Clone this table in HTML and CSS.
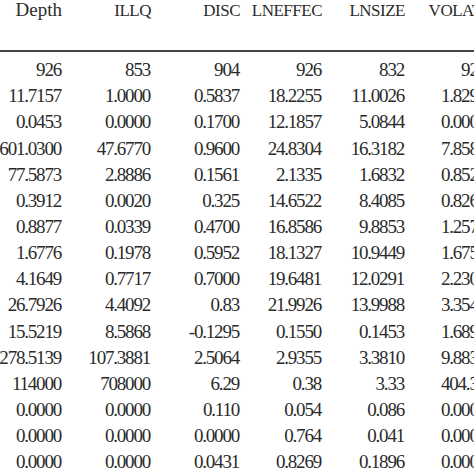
FILE: index.html
```html
<!DOCTYPE html>
<html>
<head>
<meta charset="utf-8">
<link rel="stylesheet" href="styles.css">
</head>
<body>
<div class="table">
  <div class="head">
    <div class="cell h wide">Depth</div>
    <div class="cell h">ILLQ</div>
    <div class="cell h">DISC</div>
    <div class="cell h">LNEFFEC</div>
    <div class="cell h">LNSIZE</div>
    <div class="cell h">VOLATI</div>
  </div>
  <div class="body">
    <div class="cell">926</div><div class="cell">853</div><div class="cell">904</div><div class="cell">926</div><div class="cell">832</div><div class="cell">926</div>
    <div class="cell">11.7157</div><div class="cell">1.0000</div><div class="cell">0.5837</div><div class="cell">18.2255</div><div class="cell">11.0026</div><div class="cell">1.8295</div>
    <div class="cell">0.0453</div><div class="cell">0.0000</div><div class="cell">0.1700</div><div class="cell">12.1857</div><div class="cell">5.0844</div><div class="cell">0.0000</div>
    <div class="cell">601.0300</div><div class="cell">47.6770</div><div class="cell">0.9600</div><div class="cell">24.8304</div><div class="cell">16.3182</div><div class="cell">7.8580</div>
    <div class="cell">77.5873</div><div class="cell">2.8886</div><div class="cell">0.1561</div><div class="cell">2.1335</div><div class="cell">1.6832</div><div class="cell">0.8523</div>
    <div class="cell">0.3912</div><div class="cell">0.0020</div><div class="cell">0.325</div><div class="cell">14.6522</div><div class="cell">8.4085</div><div class="cell">0.8260</div>
    <div class="cell">0.8877</div><div class="cell">0.0339</div><div class="cell">0.4700</div><div class="cell">16.8586</div><div class="cell">9.8853</div><div class="cell">1.2570</div>
    <div class="cell">1.6776</div><div class="cell">0.1978</div><div class="cell">0.5952</div><div class="cell">18.1327</div><div class="cell">10.9449</div><div class="cell">1.6750</div>
    <div class="cell">4.1649</div><div class="cell">0.7717</div><div class="cell">0.7000</div><div class="cell">19.6481</div><div class="cell">12.0291</div><div class="cell">2.2300</div>
    <div class="cell">26.7926</div><div class="cell">4.4092</div><div class="cell">0.83</div><div class="cell">21.9926</div><div class="cell">13.9988</div><div class="cell">3.3540</div>
    <div class="cell">15.5219</div><div class="cell">8.5868</div><div class="cell">-0.1295</div><div class="cell">0.1550</div><div class="cell">0.1453</div><div class="cell">1.6890</div>
    <div class="cell">278.5139</div><div class="cell">107.3881</div><div class="cell">2.5064</div><div class="cell">2.9355</div><div class="cell">3.3810</div><div class="cell">9.8830</div>
    <div class="cell">114000</div><div class="cell">708000</div><div class="cell">6.29</div><div class="cell">0.38</div><div class="cell">3.33</div><div class="cell">404.31</div>
    <div class="cell">0.0000</div><div class="cell">0.0000</div><div class="cell">0.110</div><div class="cell">0.054</div><div class="cell">0.086</div><div class="cell">0.0000</div>
    <div class="cell">0.0000</div><div class="cell">0.0000</div><div class="cell">0.0000</div><div class="cell">0.764</div><div class="cell">0.041</div><div class="cell">0.0000</div>
    <div class="cell">0.0000</div><div class="cell">0.0000</div><div class="cell">0.0431</div><div class="cell">0.8269</div><div class="cell">0.1896</div><div class="cell">0.0000</div>
  </div>
</div>
</body>
</html>
```

FILE: styles.css
```css
html, body {
  margin: 0;
  padding: 0;
  background: #ffffff;
  overflow: hidden;
  width: 474px;
  height: 474px;
}

.table {
  font-family: "Liberation Serif", "Times New Roman", serif;
  color: #2b2b2b;
  width: 520px;
}

.head,
.body {
  display: grid;
  grid-template-columns: 62px 89px 89px 82px 83px 82px;
}

.head {
  align-items: baseline;
  height: 20px;
  padding-bottom: 30px;
  border-bottom: 2px solid #454545;
}

.body {
  padding-top: 5.2px;
  grid-auto-rows: 26.15px;
}

.cell {
  display: flex;
  justify-content: flex-end;
  white-space: nowrap;
  font-size: 19px;
  line-height: 26.15px;
  letter-spacing: -1.2px;
  padding-right: 1px;
}

.cell.h {
  font-size: 17px;
  line-height: 20px;
  letter-spacing: -0.5px;
  padding-right: 0;
}

.cell.h.wide {
  font-size: 19px;
  letter-spacing: 0;
}
```
